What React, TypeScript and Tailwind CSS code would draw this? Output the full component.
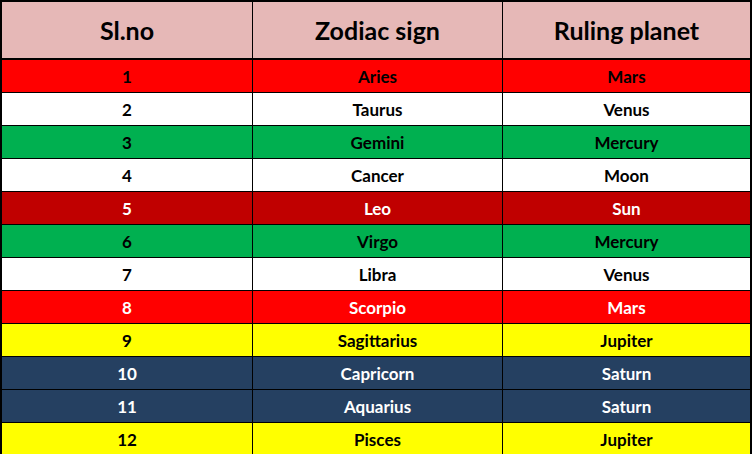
const rows: { n: string; sign: string; planet: string; bg: string; fg: string }[] = [
  { n: '1', sign: 'Aries', planet: 'Mars', bg: 'bg-[#ff0000]', fg: 'text-black' },
  { n: '2', sign: 'Taurus', planet: 'Venus', bg: 'bg-white', fg: 'text-black' },
  { n: '3', sign: 'Gemini', planet: 'Mercury', bg: 'bg-[#00b050]', fg: 'text-black' },
  { n: '4', sign: 'Cancer', planet: 'Moon', bg: 'bg-white', fg: 'text-black' },
  { n: '5', sign: 'Leo', planet: 'Sun', bg: 'bg-[#c00000]', fg: 'text-white' },
  { n: '6', sign: 'Virgo', planet: 'Mercury', bg: 'bg-[#00b050]', fg: 'text-black' },
  { n: '7', sign: 'Libra', planet: 'Venus', bg: 'bg-white', fg: 'text-black' },
  { n: '8', sign: 'Scorpio', planet: 'Mars', bg: 'bg-[#ff0000]', fg: 'text-white' },
  { n: '9', sign: 'Sagittarius', planet: 'Jupiter', bg: 'bg-[#ffff00]', fg: 'text-black' },
  { n: '10', sign: 'Capricorn', planet: 'Saturn', bg: 'bg-[#254061]', fg: 'text-white' },
  { n: '11', sign: 'Aquarius', planet: 'Saturn', bg: 'bg-[#254061]', fg: 'text-white' },
  { n: '12', sign: 'Pisces', planet: 'Jupiter', bg: 'bg-[#ffff00]', fg: 'text-black' },
];

export default function App() {
  return (
    <div className="w-[754px] h-[454px] overflow-hidden bg-white font-['Lato','Open_Sans',sans-serif]">
      <div className="w-[752px] border-2 border-b-0 border-black">
        <div className="grid grid-cols-[250px_250px_248px] h-[58px] border-b-2 border-black bg-[#e6b8b7] text-[25px] font-bold text-black">
          <div className="flex items-center justify-center pt-[2px]">Sl.no</div>
          <div className="flex items-center justify-center pt-[2px] border-l border-black">Zodiac sign</div>
          <div className="flex items-center justify-center pt-[2px] border-l border-black">Ruling planet</div>
        </div>
        {rows.map((r) => (
          <div
            key={r.n}
            className={`grid grid-cols-[250px_250px_248px] h-[33px] border-b border-black text-[17px] font-bold ${r.bg} ${r.fg}`}
          >
            <div className="flex items-center justify-center pt-[2px]">{r.n}</div>
            <div className="flex items-center justify-center pt-[2px] border-l border-black">{r.sign}</div>
            <div className="flex items-center justify-center pt-[2px] border-l border-black">{r.planet}</div>
          </div>
        ))}
      </div>
    </div>
  );
}
